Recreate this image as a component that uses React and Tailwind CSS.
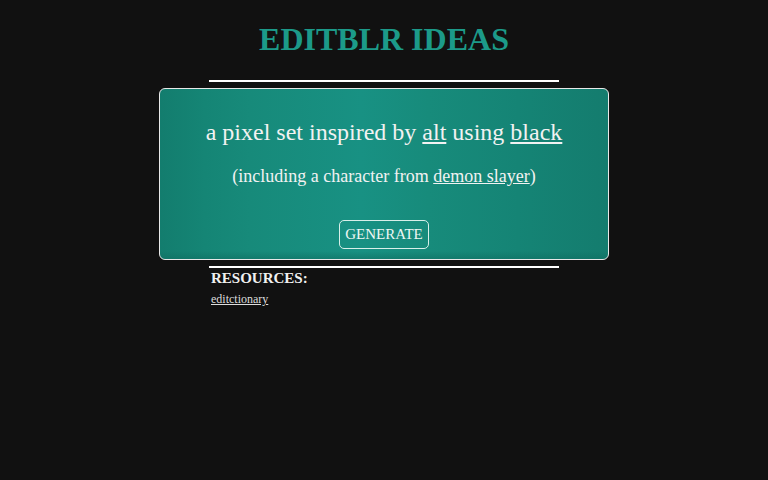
export default function App() {
  return (
    <div className="min-h-[480px] w-full bg-[#111111] text-white" style={{ fontFamily: '"Liberation Serif", "Times New Roman", serif' }}>
      <div className="flex flex-col items-center">
        <h1 className="mt-[21px] text-[32px] font-bold leading-[37px] text-[#1c9a89]">EDITBLR IDEAS</h1>
        <div className="mt-[22px] h-[2px] w-[350px] bg-white"></div>
        <div className="relative mt-[6px] flex h-[172px] w-[450px] flex-col items-center rounded-[6px] border border-[#e8e8e8] bg-[linear-gradient(to_right,#137d6e_0%,#158575_10%,#178a7a_20%,#189183_45%,#178b7b_60%,#158475_80%,#147c6e_100%)]">
          <div className="pointer-events-none absolute inset-x-0 bottom-0 h-[8px] rounded-b-[6px] bg-gradient-to-b from-transparent to-[#0f6f62]/60"></div>
          <p className="mt-[27px] text-[24px] leading-[32px] text-[#f2f2f2]">
            a pixel set inspired by <span className="underline">alt</span> using <span className="underline">black</span>
          </p>
          <p className="mt-[17px] text-[18px] leading-[22px] text-[#f2f2f2]">
            (including a character from <span className="underline">demon slayer</span>)
          </p>
          <button className="mt-[33px] h-[29px] w-[90px] rounded-[5px] border border-[#d8efe9] bg-transparent text-[15px] leading-[27px] text-[#eef7f4]" style={{ fontFamily: '"Liberation Serif", serif' }}>
            GENERATE
          </button>
        </div>
        <div className="mt-[6px] h-[2px] w-[350px] bg-white"></div>
        <div className="w-[350px] pl-[2px]">
          <div className="mt-[1px] text-[15px] font-bold leading-[18px] text-[#f0f0f0]">RESOURCES:</div>
          <div className="mt-[5px] text-[12px] leading-[14px] text-[#dddddd] underline">editctionary</div>
        </div>
      </div>
    </div>
  );
}
